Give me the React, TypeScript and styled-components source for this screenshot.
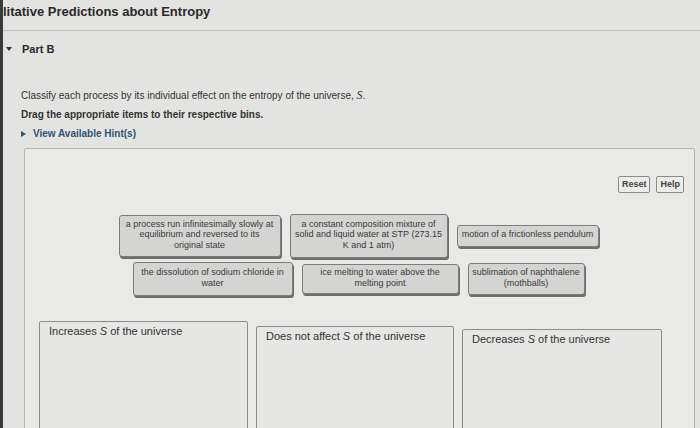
import styled, { createGlobalStyle } from "styled-components";

const GlobalStyle = createGlobalStyle`
  html, body {
    margin: 0;
    padding: 0;
    background: #e3e3e1;
    font-family: "Liberation Sans", Arial, sans-serif;
    color: #2b2b2b;
  }
`;

const Page = styled.div`
  width: 700px;
  height: 428px;
  overflow: hidden;
  border-left: 3px solid #3a3a3a;
  box-sizing: border-box;
`;

const Title = styled.h1`
  margin: 0;
  padding: 4px 0 0 0;
  height: 26px;
  font-size: 13px;
  font-weight: bold;
  color: #2a2a2a;
  border-bottom: 1px solid #c4c4c2;
`;

const PartHeader = styled.div`
  display: flex;
  align-items: center;
  height: 36px;
  padding-left: 3px;
  gap: 10px;
  font-size: 11px;
  font-weight: bold;
  color: #2a2a2a;
`;

const Caret = styled.span`
  width: 0;
  height: 0;
  border-left: 3px solid transparent;
  border-right: 3px solid transparent;
  border-top: 4px solid #333;
`;

const Body = styled.div`
  padding: 22px 5px 0 18px;
`;

const Prompt = styled.p<{ $bold?: boolean }>`
  margin: 0 0 7px 0;
  font-size: 10px;
  line-height: 12px;
  color: #333;
  font-weight: ${(p) => (p.$bold ? "bold" : "normal")};
`;

const MathS = styled.i`
  font-family: "Liberation Serif", "Times New Roman", serif;
  font-size: 12px;
`;

const BinS = styled.i`
  font-style: italic;
`;

const HintLink = styled.div`
  display: flex;
  align-items: center;
  gap: 7px;
  font-size: 10px;
  line-height: 12px;
  font-weight: bold;
  color: #2e5575;
  margin: 0 0 8px 0;
`;

const HintCaret = styled.span`
  width: 0;
  height: 0;
  border-top: 3.5px solid transparent;
  border-bottom: 3.5px solid transparent;
  border-left: 5px solid #2e5575;
`;

const Panel = styled.div`
  margin-left: 3px;
  border: 1px solid #b5b5b3;
  border-radius: 2px;
  background: #e9e9e7;
  height: 300px;
  padding: 27px 10px 0 12px;
  box-sizing: border-box;
`;

const Toolbar = styled.div`
  display: flex;
  justify-content: flex-end;
  gap: 6px;
`;

const SmallButton = styled.button`
  font-family: "Liberation Sans", Arial, sans-serif;
  font-size: 9px;
  font-weight: bold;
  color: #444;
  background: #ececea;
  border: 1px solid #8a8a88;
  border-radius: 2px;
  padding: 2px 3px;
  line-height: 11px;
`;

const ItemRows = styled.div`
  display: flex;
  flex-direction: column;
  align-items: center;
  gap: 4px;
  margin-top: 21px;
  padding-right: 4px;
`;

const ItemRow = styled.div`
  display: flex;
  align-items: center;
  gap: 9px;
`;

const Item = styled.div<{ $w: number; $h: number }>`
  width: ${(p) => p.$w}px;
  height: ${(p) => p.$h}px;
  box-sizing: border-box;
  display: flex;
  flex-direction: column;
  align-items: center;
  justify-content: center;
  text-align: center;
  white-space: nowrap;
  font-size: 9px;
  line-height: 10.5px;
  color: #3a3a3a;
  background: #d4d4d2;
  border: 1px solid #7c7c7a;
  border-radius: 3px;
  box-shadow: 1px 2px 0 #6e6e6c;
  padding: 0 2px 3px;
`;

const Bins = styled.div`
  display: flex;
  gap: 8px;
  margin-top: 25px;
  margin-left: 2px;
`;

const Bin = styled.div<{ $w: number; $top: number }>`
  width: ${(p) => p.$w}px;
  margin-top: ${(p) => p.$top}px;
  height: 140px;
  border: 1px solid #8c8c8a;
  border-radius: 2px;
  background: #e6e6e4;
  box-sizing: border-box;
  padding: 3px 9px;
  font-size: 11px;
  color: #333;
`;

const items = [
  [
    { w: 162, h: 42, lines: ["a process run infinitesimally slowly at", "equilibrium and reversed to its", "original state"] },
    { w: 158, h: 44, lines: ["a constant composition mixture of", "solid and liquid water at STP (273.15", "K and 1 atm)"] },
    { w: 142, h: 22, lines: ["motion of a frictionless pendulum"] },
  ],
  [
    { w: 160, h: 34, lines: ["the dissolution of sodium chloride in", "water"] },
    { w: 157, h: 30, lines: ["ice melting to water above the", "melting point"] },
    { w: 117, h: 32, lines: ["sublimation of naphthalene", "(mothballs)"] },
  ],
];

const bins = [
  { w: 209, top: 0, label: "Increases", rest: "of the universe" },
  { w: 198, top: 5, label: "Does not affect", rest: "of the universe" },
  { w: 200, top: 8, label: "Decreases", rest: "of the universe" },
];

export default function App() {
  return (
    <Page>
      <GlobalStyle />
      <Title>litative Predictions about Entropy</Title>
      <PartHeader>
        <Caret />
        <span>Part B</span>
      </PartHeader>
      <Body>
        <Prompt>
          Classify each process by its individual effect on the entropy of the universe, <MathS>S</MathS>.
        </Prompt>
        <Prompt $bold>Drag the appropriate items to their respective bins.</Prompt>
        <HintLink>
          <HintCaret />
          <span>View Available Hint(s)</span>
        </HintLink>
        <Panel>
          <Toolbar>
            <SmallButton>Reset</SmallButton>
            <SmallButton>Help</SmallButton>
          </Toolbar>
          <ItemRows>
            {items.map((row, i) => (
              <ItemRow key={i}>
                {row.map((it) => (
                  <Item key={it.lines[0]} $w={it.w} $h={it.h}>
                    {it.lines.map((l) => (
                      <span key={l}>{l}</span>
                    ))}
                  </Item>
                ))}
              </ItemRow>
            ))}
          </ItemRows>
          <Bins>
            {bins.map((b) => (
              <Bin key={b.label} $w={b.w} $top={b.top}>
                {b.label} <BinS>S</BinS> {b.rest}
              </Bin>
            ))}
          </Bins>
        </Panel>
      </Body>
    </Page>
  );
}
